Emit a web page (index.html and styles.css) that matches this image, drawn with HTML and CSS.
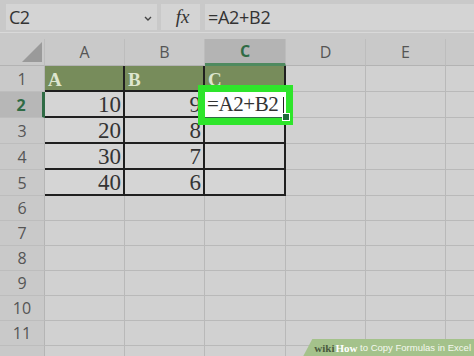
FILE: index.html
```html
<!DOCTYPE html>
<html>
<head>
<meta charset="utf-8">
<link rel="stylesheet" href="styles.css">
</head>
<body>
<div class="page">
  <div class="topbar">
    <div class="namebox"><span class="nb-text">C2</span><svg class="chev" width="8" height="5" viewBox="0 0 8 5"><path d="M1 1 L4 4 L7 1" fill="none" stroke="#444" stroke-width="1.4"/></svg></div>
    <div class="fxbox"><span class="fx">fx</span></div>
    <div class="formula">=A2+B2</div>
  </div>
  <div class="gap"></div>
  <div class="sheet">
    <div class="corner"><svg width="20" height="20" viewBox="0 0 20 20"><path d="M20 0 L20 20 L0 20 Z" fill="#9a9a9a"/></svg></div>
    <div class="ch">A</div><div class="ch">B</div><div class="ch ch-sel">C</div><div class="ch">D</div><div class="ch">E</div><div class="ch last"></div>

    <div class="rh">1</div>
    <div class="c t hd">A</div><div class="c t hd">B</div><div class="c t hd">C</div><div class="c"></div><div class="c"></div><div class="c last"></div>

    <div class="rh rh-sel">2</div>
    <div class="c t num">10</div><div class="c t num">9</div>
    <div class="c t active"><span class="ftext">=A2+B2</span><span class="caret"></span><span class="handle"></span></div>
    <div class="c"></div><div class="c"></div><div class="c last"></div>

    <div class="rh">3</div>
    <div class="c t num">20</div><div class="c t num">8</div><div class="c t"></div><div class="c"></div><div class="c"></div><div class="c last"></div>

    <div class="rh">4</div>
    <div class="c t num">30</div><div class="c t num">7</div><div class="c t"></div><div class="c"></div><div class="c"></div><div class="c last"></div>

    <div class="rh">5</div>
    <div class="c t num">40</div><div class="c t num">6</div><div class="c t"></div><div class="c"></div><div class="c"></div><div class="c last"></div>

    <div class="rh">6</div><div class="c"></div><div class="c"></div><div class="c"></div><div class="c"></div><div class="c"></div><div class="c last"></div>
    <div class="rh">7</div><div class="c"></div><div class="c"></div><div class="c"></div><div class="c"></div><div class="c"></div><div class="c last"></div>
    <div class="rh">8</div><div class="c"></div><div class="c"></div><div class="c"></div><div class="c"></div><div class="c"></div><div class="c last"></div>
    <div class="rh">9</div><div class="c"></div><div class="c"></div><div class="c"></div><div class="c"></div><div class="c"></div><div class="c last"></div>
    <div class="rh">10</div><div class="c"></div><div class="c"></div><div class="c"></div><div class="c"></div><div class="c"></div><div class="c last"></div>
    <div class="rh">11</div><div class="c"></div><div class="c"></div><div class="c"></div><div class="c"></div><div class="c"></div><div class="c last"></div>
    <div class="rh rh-cut"></div><div class="c"></div><div class="c"></div><div class="c"></div><div class="c"></div><div class="c"></div><div class="c last"></div>
  </div>
  <div class="wm"><span class="wm-wiki">wiki</span><span class="wm-how">How</span><span class="wm-rest"> to Copy Formulas in Excel</span></div>
</div>
</body>
</html>
```
FILE: styles.css
```css
html, body {
  margin: 0;
  padding: 0;
}
body {
  background: #cfcfcf;
  font-family: "Open Sans", "DejaVu Sans", sans-serif;
}
.page {
  position: relative;
  width: 474px;
  height: 356px;
  overflow: hidden;
  background: #cfcfcf;
}
.topbar {
  height: 33px;
  box-sizing: border-box;
  padding: 4px 0 2px 6px;
  display: flex;
  gap: 4px;
  background: #c9c9c9;
  border-bottom: 1px solid #d9d9d9;
}
.namebox {
  width: 151px;
  background: #d4d4d4;
  display: flex;
  align-items: center;
  justify-content: space-between;
  padding: 0 5px 0 3px;
  box-sizing: border-box;
}
.nb-text {
  font-size: 18px;
  color: #333;
  letter-spacing: -0.5px;
}
.chev {
  margin-top: 2px;
}
.fxbox {
  width: 39px;
  background: #d4d4d4;
  display: flex;
  align-items: center;
  justify-content: center;
}
.fx {
  font-family: "Liberation Serif", serif;
  font-style: italic;
  font-size: 19px;
  color: #333;
  margin-left: 4px;
}
.formula {
  flex: 1;
  margin-left: 1px;
  background: #d4d4d4;
  font-size: 18px;
  color: #333;
  display: flex;
  align-items: center;
  padding-left: 3px;
  letter-spacing: -0.3px;
}
.gap {
  height: 6px;
  background: #c9c9c9;
}
.sheet {
  display: grid;
  grid-template-columns: 45px 80px 80px 81px 80px 80px 1fr;
  grid-template-rows: 27px repeat(5, 26px) repeat(7, 25px);
}
.corner {
  background: #c9c9c9;
  border-right: 1px solid #bdbdbd;
  border-bottom: 1px solid #b3b3b3;
  display: flex;
  align-items: flex-end;
  justify-content: flex-end;
  padding: 0 2px 3px 0;
}
.ch {
  background: #c9c9c9;
  border-right: 1px solid #bdbdbd;
  border-bottom: 1px solid #b3b3b3;
  display: flex;
  align-items: center;
  justify-content: center;
  font-size: 16px;
  color: #555;
}
.ch-sel {
  background: #b4b4b4;
  color: #2f6b45;
  font-weight: bold;
  border-bottom: 3px solid #4f8a5f;
}
.rh {
  background: #c9c9c9;
  border-right: 1px solid #b5b5b5;
  border-bottom: 1px solid #bdbdbd;
  display: flex;
  align-items: center;
  justify-content: center;
  font-size: 16px;
  color: #555;
}
.rh-sel {
  background: #b7b7b7;
  color: #2f6b45;
  font-weight: bold;
  border-right: 3px solid #2f6b45;
}
.c {
  background: #d1d1d1;
  border-right: 1px solid #b9b9b9;
  border-bottom: 1px solid #b9b9b9;
}
.last {
  border-right: none;
}
.t {
  background: #d5d5d5;
  border-right: 2px solid #1f1f1f;
  border-bottom: 2px solid #1f1f1f;
}
.hd {
  background: #778c5b;
  color: #dde6cf;
  font-family: "Liberation Serif", serif;
  font-weight: bold;
  font-size: 19px;
  padding-left: 3px;
  line-height: 28px;
}
.num {
  font-family: "Liberation Serif", serif;
  font-size: 23px;
  color: #333;
  text-align: right;
  padding-right: 2px;
  line-height: 25px;
}
.active {
  position: relative;
  z-index: 2;
  background: #ffffff;
  outline: 7px solid #2ee52b;
  border: none;
  border-bottom: 1px solid #2f6b45;
  display: flex;
  align-items: center;
  padding-left: 2px;
}
.ftext {
  font-family: "Liberation Serif", serif;
  font-size: 21px;
  color: #333;
  letter-spacing: -0.4px;
}
.caret {
  position: absolute;
  right: 2px;
  top: 5px;
  width: 1px;
  height: 17px;
  background: #222;
}
.handle {
  position: absolute;
  right: -4px;
  bottom: -4px;
  width: 6px;
  height: 6px;
  background: #1f6b3a;
  border: 1px solid #ffffff;
}
.wm {
  position: absolute;
  right: 0;
  bottom: 0;
  height: 17px;
  background: #a4c28b;
  clip-path: polygon(9px 0, 100% 0, 100% 100%, 0 100%);
  display: flex;
  align-items: center;
  padding: 0 3px 0 11px;
  font-family: "Liberation Sans", Arial, sans-serif;
  font-size: 9.5px;
  color: #f4f8ef;
  white-space: nowrap;
}
.wm-wiki {
  font-family: "Liberation Serif", serif;
  font-weight: bold;
  color: #4a5a3e;
  font-size: 11px;
}
.wm-how {
  font-weight: bold;
  font-family: "Liberation Serif", serif;
  font-size: 11px;
  color: #ffffff;
  margin-left: 1px;
}
.wm-rest {
  white-space: pre;
}
```
